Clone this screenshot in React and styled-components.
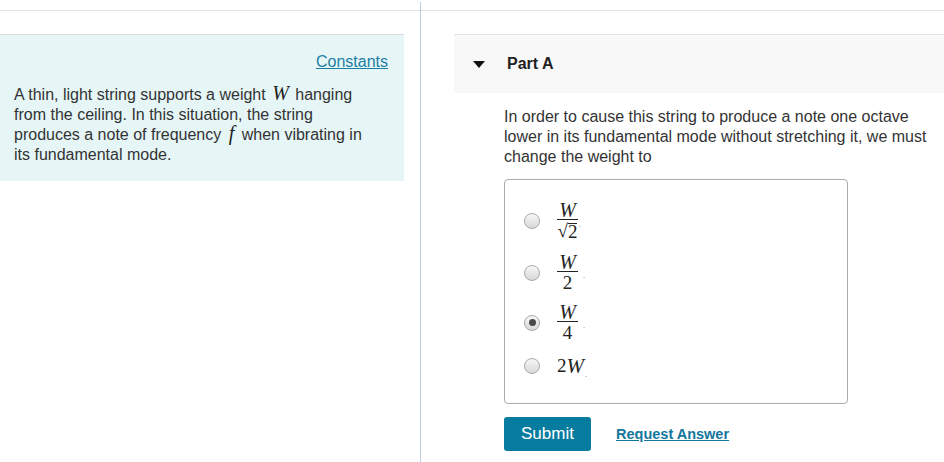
import { createGlobalStyle } from "styled-components";
import styled from "styled-components";

const GlobalStyle = createGlobalStyle`
  html, body {
    margin: 0;
    padding: 0;
    background: #fff;
  }
  body {
    font-family: "Liberation Sans", Arial, sans-serif;
    font-size: 16px;
    color: #333;
  }
  * {
    box-sizing: border-box;
  }
`;

const Page = styled.div`
  display: flex;
  padding-top: 2px;
  min-height: 100vh;
`;

const LeftColumn = styled.div`
  width: 421px;
  flex-shrink: 0;
  border-right: 1px solid #bfd0dd;
`;

const RightColumn = styled.div`
  flex: 1;
  min-width: 0;
`;

const TopRule = styled.div`
  height: 9px;
  border-bottom: 1px solid #e2e2e2;
`;

const InfoPanel = styled.div`
  margin-top: 23px;
  width: 404px;
  background: #e6f6f7;
  border-top: 1px solid #dcdcdc;
  padding: 17px 16px 16px 14px;
`;

const ConstantsRow = styled.div`
  text-align: right;
  line-height: 20px;
  margin-bottom: 13px;
`;

const Link = styled.a`
  color: ${(p) => (p.$bold ? "#13779d" : "#1b7fa3")};
  font-weight: ${(p) => (p.$bold ? 700 : 400)};
  font-size: ${(p) => (p.$bold ? "14.5px" : "16px")};
  text-decoration: underline;
  cursor: pointer;
`;

const Text = styled.p`
  margin: 0;
  line-height: 20px;
  max-width: ${(p) => p.$width || "none"};
`;

const MathVar = styled.span`
  font-family: "Liberation Serif", "Times New Roman", serif;
  font-style: italic;
  font-size: 20px;
  line-height: 16px;
  color: #222;
  margin: 0 ${(p) => p.$space || "2px"};
`;

const PartHeader = styled.div`
  margin-top: 23px;
  margin-left: 33px;
  height: 59px;
  background: #f8f8f8;
  border-top: 1px solid #e4e4e4;
  display: flex;
  align-items: center;
  padding-left: 19px;
  gap: 22px;
`;

const Caret = styled.span`
  width: 0;
  height: 0;
  border-left: 6px solid transparent;
  border-right: 6px solid transparent;
  border-top: 7px solid #111;
`;

const PartTitle = styled.h2`
  margin: 0;
  font-size: 16px;
  font-weight: 700;
  color: #222;
`;

const PartBody = styled.div`
  padding: 14px 6px 0 83px;
`;

const Options = styled.div`
  margin-top: 12px;
  width: 344px;
  height: 225px;
  border: 1px solid #ababab;
  border-radius: 4px;
  padding: 22px 0 0 19px;
  display: flex;
  flex-direction: column;
  gap: 15px;
`;

const OptionRow = styled.label`
  display: flex;
  align-items: center;
  gap: 17px;
  height: ${(p) => p.$h};
`;

const Radio = styled.span`
  width: 16px;
  height: 16px;
  border-radius: 50%;
  border: 1px solid #a9a9a9;
  background: linear-gradient(#f7f7f7, #d8d8d8);
  display: flex;
  align-items: center;
  justify-content: center;
  flex-shrink: 0;

  &::after {
    content: "";
    width: 7px;
    height: 7px;
    border-radius: 50%;
    background: #4a4a4a;
    display: ${(p) => (p.$checked ? "block" : "none")};
  }
`;

const Math = styled.span`
  display: inline-flex;
  align-items: center;
  font-family: "Liberation Serif", "Times New Roman", serif;
  font-size: 19px;
  color: #222;
`;

const Frac = styled.span`
  display: inline-flex;
  flex-direction: column;
  align-items: center;
`;

const Num = styled.span`
  line-height: 16px;
  font-size: 20px;
  padding: 0 2px 1px;
  border-bottom: 1px solid #222;
  min-width: 21px;
  text-align: center;
`;

const Den = styled.span`
  line-height: 18px;
  padding-top: 2px;
`;

const Italic = styled.i`
  font-style: italic;
  font-size: ${(p) => p.$size || "inherit"};
`;

const Radical = styled.span`
  display: inline-flex;
  align-items: flex-start;
`;

const Radicand = styled.span`
  border-top: 1px solid #222;
  line-height: 15px;
  margin-top: 1px;
`;

const Dot = styled.span`
  font-size: 8px;
  color: #777;
  align-self: ${(p) => (p.$low ? "flex-end" : "center")};
  margin-left: ${(p) => p.$gap || "3px"};
  margin-top: 6px;
`;

const Actions = styled.div`
  margin-top: 13px;
  display: flex;
  align-items: center;
  gap: 25px;
`;

const SubmitButton = styled.button`
  width: 87px;
  height: 34px;
  border: none;
  border-radius: 3px;
  background: #087c9f;
  color: #fff;
  font-family: "Liberation Sans", Arial, sans-serif;
  font-size: 17px;
  cursor: pointer;
`;

const options = [
  { key: "sqrt", num: "W", den: "sqrt2", h: "38px" },
  { key: "half", num: "W", den: "2", h: "35px" },
  { key: "quarter", num: "W", den: "4", h: "35px", checked: true },
  { key: "double", plain: true, h: "22px" },
];

export default function App() {
  return (
    <>
      <GlobalStyle />
      <Page>
        <LeftColumn>
          <TopRule />
          <InfoPanel>
            <ConstantsRow>
              <Link>Constants</Link>
            </ConstantsRow>
            <Text $width="362px">
              A thin, light string supports a weight <MathVar>W</MathVar> hanging
              from the ceiling. In this situation, the string produces a note of
              frequency <MathVar $space="3px">f</MathVar> when vibrating in its
              fundamental mode.
            </Text>
          </InfoPanel>
        </LeftColumn>
        <RightColumn>
          <TopRule />
          <PartHeader>
            <Caret />
            <PartTitle>Part A</PartTitle>
          </PartHeader>
          <PartBody>
            <Text>
              In order to cause this string to produce a note one octave lower in
              its fundamental mode without stretching it, we must change the
              weight to
            </Text>
            <Options>
              {options.map((o) => (
                <OptionRow key={o.key} $h={o.h}>
                  <Radio $checked={o.checked} />
                  {o.plain ? (
                    <Math>
                      2<Italic $size="21px">W</Italic>
                      <Dot $low $gap="1px">.</Dot>
                    </Math>
                  ) : (
                    <Math>
                      <Frac>
                        <Num>
                          <Italic>{o.num}</Italic>
                        </Num>
                        <Den>
                          {o.den === "sqrt2" ? (
                            <Radical>
                              √<Radicand>2</Radicand>
                            </Radical>
                          ) : (
                            o.den
                          )}
                        </Den>
                      </Frac>
                      <Dot $gap={o.den === "sqrt2" ? "1px" : "5px"}>.</Dot>
                    </Math>
                  )}
                </OptionRow>
              ))}
            </Options>
            <Actions>
              <SubmitButton>Submit</SubmitButton>
              <Link $bold>Request Answer</Link>
            </Actions>
          </PartBody>
        </RightColumn>
      </Page>
    </>
  );
}
